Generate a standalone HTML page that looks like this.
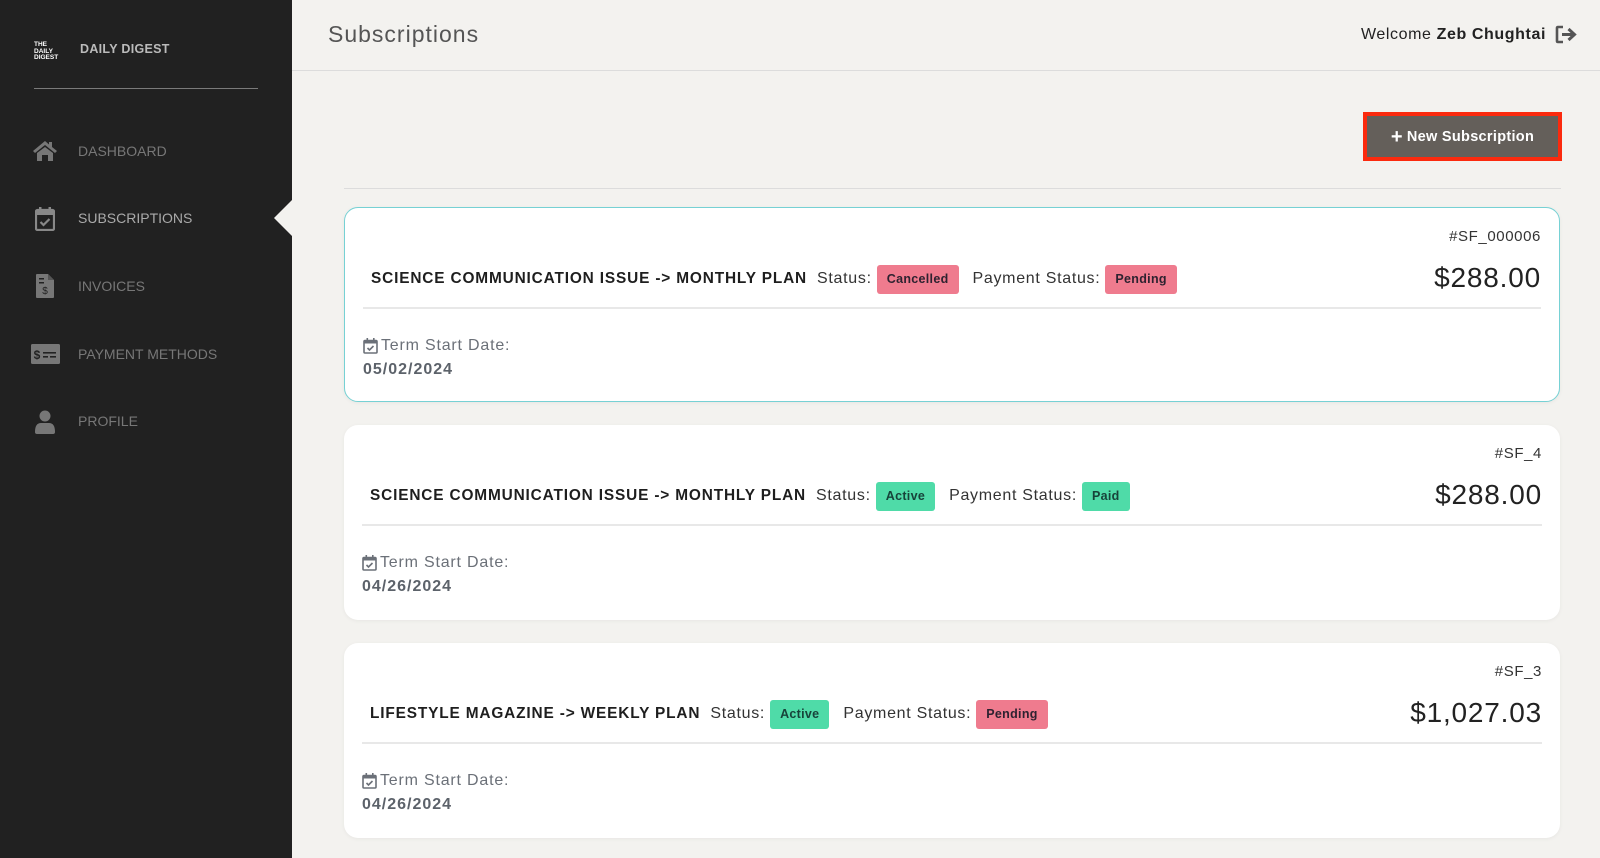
<!DOCTYPE html>
<html><head><meta charset="utf-8"><style>
*{margin:0;padding:0;box-sizing:border-box}
body{width:1600px;height:858px;overflow:hidden;background:#f3f2ef;font-family:"Liberation Sans",sans-serif;position:relative}
.sb{position:absolute;left:0;top:0;width:292px;height:858px;background:#212121}
.abs{position:absolute}
.nav{position:absolute;left:78px;font-size:14px;color:#777;transform:translateY(-50%);letter-spacing:0}
.ico{position:absolute;left:32px;transform:translateY(-50%)}
.card{position:absolute;left:344px;width:1216px;height:195px;background:#fff;border-radius:14px;box-shadow:0 1px 4px rgba(0,0,0,.05)}
.card .id{position:absolute;right:18px;top:20px;font-size:15px;color:#333;letter-spacing:.6px}
.card .row{position:absolute;left:26px;top:56px;height:30px;display:flex;align-items:center;font-size:16px;color:#333;white-space:nowrap;letter-spacing:.7px}
.card .t{font-weight:bold;font-size:15.4px;color:#1e1e1e;margin-right:10px;letter-spacing:.85px}
.badge{display:inline-block;height:29px;line-height:29px;padding:0 10px;border-radius:3px;font-size:12.5px;font-weight:bold;color:#2e2230;margin:0 14px 0 5px;letter-spacing:.3px}
.pk{background:#ef7b8e}.gr{background:#4fdba8;color:#17433a}
.card .price{position:absolute;right:18px;top:54px;font-size:28px;color:#222;letter-spacing:.8px}
.card .hr{position:absolute;left:18px;right:18px;top:99px;height:2px;background:#e8e8e8}
.card .term{position:absolute;left:18px;top:129px;font-size:16px;color:#6b7078;display:flex;align-items:center;gap:3px;letter-spacing:.8px}
.card .date{position:absolute;left:18px;top:153px;font-size:16px;font-weight:bold;color:#5c626a;letter-spacing:1px}
</style></head><body>
<div class="sb">
  <div class="abs" style="left:34px;top:42px;width:26px;height:22px;color:#fff;font-size:6.5px;font-weight:bold;line-height:6.5px">THE<br>DAILY<br>DIGEST</div>
  <div class="abs" style="left:80px;top:42px;font-size:12.5px;font-weight:bold;color:#bbb;letter-spacing:.3px">DAILY DIGEST</div>
  <div class="abs" style="left:34px;top:88px;width:224px;height:1px;background:#7a7a7a"></div>
  <svg class="ico" style="top:151px" width="26" height="22" viewBox="0 0 26 22"><path d="M13 1 L1 11 L3 13 L13 5 L23 13 L25 11 L20 7 V2 H17 V4.5Z M5 13 V21 H10 V15 H16 V21 H21 V13 L13 7Z" fill="#777"/></svg>
  <div class="nav" style="top:151px">DASHBOARD</div>
  <svg class="ico" style="top:219px;left:35px" width="20" height="24" viewBox="0 0 20 24"><rect x="1" y="3" width="18" height="20" rx="1.5" fill="none" stroke="#888" stroke-width="2.2"/><rect x="1" y="3" width="18" height="5" fill="#888"/><rect x="4" y="0" width="2.5" height="5" fill="#888"/><rect x="13.5" y="0" width="2.5" height="5" fill="#888"/><path d="M5.5 15 L8.5 18 L14.5 12" stroke="#888" stroke-width="2.2" fill="none"/></svg>
  <div class="nav" style="top:218px;color:#aaa">SUBSCRIPTIONS</div>
  <svg class="ico" style="top:286px;left:36px" width="18" height="24" viewBox="0 0 18 24"><path d="M0 1 Q0 0 1 0 H12 L18 6 V23 Q18 24 17 24 H1 Q0 24 0 23Z" fill="#777"/><path d="M12 0 V6 H18" fill="#555"/><text x="9" y="20" font-size="10" fill="#222" text-anchor="middle" font-family="Liberation Sans">$</text><rect x="3" y="4" width="5" height="1.5" fill="#222"/><rect x="3" y="8" width="5" height="1.5" fill="#222"/></svg>
  <div class="nav" style="top:286px">INVOICES</div>
  <svg class="ico" style="top:354px;left:31px" width="29" height="20" viewBox="0 0 29 20"><rect width="29" height="20" rx="1.5" fill="#777"/><text x="6" y="15" font-size="12" fill="#222" text-anchor="middle" font-family="Liberation Sans" font-weight="bold">$</text><rect x="12" y="8" width="13" height="1.6" fill="#222"/><rect x="12" y="12" width="5" height="1.6" fill="#222"/><rect x="19" y="12" width="6" height="1.6" fill="#222"/></svg>
  <div class="nav" style="top:354px">PAYMENT METHODS</div>
  <svg class="ico" style="top:422px;left:35px" width="20" height="24" viewBox="0 0 20 24"><circle cx="10" cy="6" r="5.5" fill="#777"/><path d="M0 22 Q0 13 6 13 H14 Q20 13 20 22 Q20 24 18 24 H2 Q0 24 0 22Z" fill="#777"/></svg>
  <div class="nav" style="top:421px">PROFILE</div>
  <div class="abs" style="left:274px;top:200px;width:0;height:0;border-top:18px solid transparent;border-bottom:18px solid transparent;border-right:18px solid #f3f2ef"></div>
</div>
<div class="abs" style="left:292px;top:70px;width:1308px;height:1px;background:#dcdcdc"></div>
<div class="abs" style="left:328px;top:21px;font-size:23px;color:#555;letter-spacing:1px">Subscriptions</div>
<div class="abs" style="right:54px;top:26px;font-size:16px;color:#222;letter-spacing:.6px">Welcome <b>Zeb Chughtai</b></div>
<svg class="abs" style="left:1555px;top:25px" width="23" height="19" viewBox="0 0 23 19"><path d="M8 2 H3 Q2 2 2 3 V16 Q2 17 3 17 H8" fill="none" stroke="#555" stroke-width="2.6"/><path d="M7 9.5 H19 M13.5 4 L19.5 9.5 L13.5 15" fill="none" stroke="#555" stroke-width="3"/></svg>
<div class="abs" style="left:1363px;top:112px;width:199px;height:49px;background:#fb2a0e;padding:4px"><div style="background:#645f5a;height:100%;color:#fff;font-weight:bold;font-size:14.5px;display:flex;align-items:center;justify-content:center;gap:4px;letter-spacing:.3px"><span style="font-size:20px;line-height:1">+</span>New Subscription</div></div>
<div class="abs" style="left:344px;top:188px;width:1217px;height:1px;background:#dcdcdc"></div>

<div class="card" style="top:207px;border:1.5px solid #76d1d4">
  <div class="id">#SF_000006</div>
  <div class="row"><span class="t">SCIENCE COMMUNICATION ISSUE -&gt; MONTHLY PLAN</span>Status:<span class="badge pk">Cancelled</span>Payment Status:<span class="badge pk">Pending</span></div>
  <div class="price">$288.00</div><div class="hr"></div>
  <div class="term"><svg width="15" height="16" viewBox="0 0 15 16"><rect x="1" y="2.5" width="13" height="12.5" rx="1" fill="none" stroke="#6b7078" stroke-width="1.6"/><rect x="1" y="2.5" width="13" height="3" fill="#6b7078"/><rect x="3.5" y="0" width="1.6" height="3" fill="#6b7078"/><rect x="10" y="0" width="1.6" height="3" fill="#6b7078"/><path d="M4.5 10 L6.5 12 L10.5 8" stroke="#6b7078" stroke-width="1.6" fill="none"/></svg>Term Start Date:</div>
  <div class="date">05/02/2024</div>
</div>
<div class="card" style="top:425px">
  <div class="id">#SF_4</div>
  <div class="row"><span class="t">SCIENCE COMMUNICATION ISSUE -&gt; MONTHLY PLAN</span>Status:<span class="badge gr">Active</span>Payment Status:<span class="badge gr">Paid</span></div>
  <div class="price">$288.00</div><div class="hr"></div>
  <div class="term"><svg width="15" height="16" viewBox="0 0 15 16"><rect x="1" y="2.5" width="13" height="12.5" rx="1" fill="none" stroke="#6b7078" stroke-width="1.6"/><rect x="1" y="2.5" width="13" height="3" fill="#6b7078"/><rect x="3.5" y="0" width="1.6" height="3" fill="#6b7078"/><rect x="10" y="0" width="1.6" height="3" fill="#6b7078"/><path d="M4.5 10 L6.5 12 L10.5 8" stroke="#6b7078" stroke-width="1.6" fill="none"/></svg>Term Start Date:</div>
  <div class="date">04/26/2024</div>
</div>
<div class="card" style="top:643px">
  <div class="id">#SF_3</div>
  <div class="row"><span class="t">LIFESTYLE MAGAZINE -&gt; WEEKLY PLAN</span>Status:<span class="badge gr">Active</span>Payment Status:<span class="badge pk">Pending</span></div>
  <div class="price">$1,027.03</div><div class="hr"></div>
  <div class="term"><svg width="15" height="16" viewBox="0 0 15 16"><rect x="1" y="2.5" width="13" height="12.5" rx="1" fill="none" stroke="#6b7078" stroke-width="1.6"/><rect x="1" y="2.5" width="13" height="3" fill="#6b7078"/><rect x="3.5" y="0" width="1.6" height="3" fill="#6b7078"/><rect x="10" y="0" width="1.6" height="3" fill="#6b7078"/><path d="M4.5 10 L6.5 12 L10.5 8" stroke="#6b7078" stroke-width="1.6" fill="none"/></svg>Term Start Date:</div>
  <div class="date">04/26/2024</div>
</div>
</body></html>
